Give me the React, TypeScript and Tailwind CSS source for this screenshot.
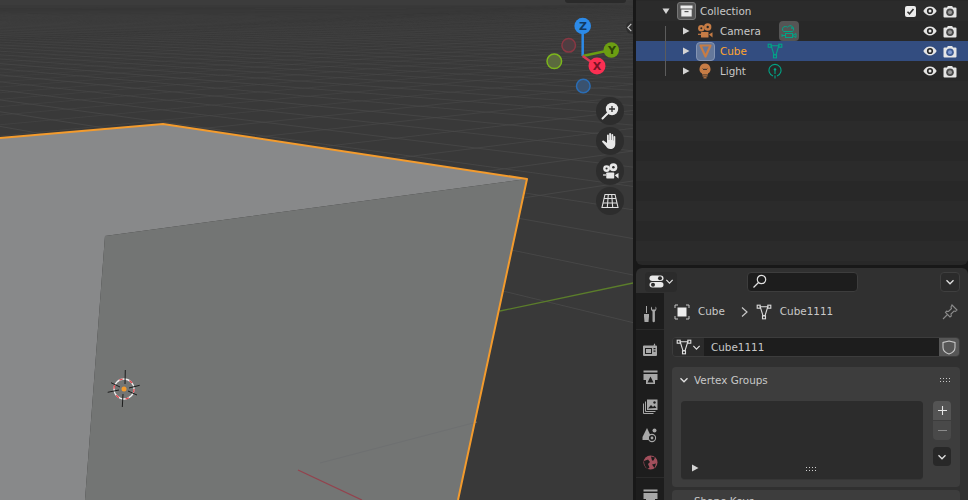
import type { ReactNode } from 'react';

const ORANGE = '#c67c45';
const TEAL = '#00a587';

// perspective floor grid, two pencils of lines meeting at the vanishing points
const HORIZON = -36.6;
const gridLines = [
  ...Array.from({ length: 60 }, (_, i) => {
    const k = i - 1;
    const y = HORIZON + 1 / (0.003209 + 0.000425 * k);
    const slope = (y - 11) / 1284;
    return { y0: y - slope * 633, y1: y, fade: Math.pow(Math.max(0, 1 - k / 50), 1.5) };
  }),
  ...Array.from({ length: 36 }, (_, i) => {
    const k = i + 2;
    const y = HORIZON + 1 / (0.003129 + 0.000734 * k);
    const slope = (-105 - y) / 1847;
    return { y0: y - slope * 633, y1: y, fade: Math.pow(Math.max(0, 1 - k / 34), 1.5) };
  }),
];

const Triangle = ({ down, className }: { down?: boolean; className?: string }) => (
  <svg width="8" height="8" viewBox="0 0 8 8" className={className}>
    <path d={down ? 'M0.5 1.5h7L4 7z' : 'M1 0.5v7L7.5 4z'} fill="#d4d4d4" />
  </svg>
);

const Chevron = ({ size = 10, color = '#e0e0e0' }: { size?: number; color?: string }) => (
  <svg width={size} height={size} viewBox="0 0 10 10">
    <path d="M1.5 3.2 5 6.8l3.5-3.6" fill="none" stroke={color} strokeWidth="1.3" />
  </svg>
);

const Eye = () => (
  <svg width="14" height="10" viewBox="0 0 14 10">
    <path d="M0.3 5C2 2 4.3 0.6 7 0.6S12 2 13.7 5C12 8 9.700 9.400 7 9.400S2 8 0.300 5z" fill="#e6e6e6" />
    <circle cx="7" cy="5" r="3.100" fill="#282828" />
    <circle cx="7" cy="5" r="1.500" fill="#e6e6e6" />
  </svg>
);

const RenderCam = ({ selected }: { selected?: boolean }) => (
  <svg width="14" height="13" viewBox="0 0 14 13">
    <path d="M1.500 2.500h2.500l.8-1.500h4.400l.8 1.500h2.500a1 1 0 0 1 1 1v8a1 1 0 0 1-1 1h-11a1 1 0 0 1-1-1v-8a1 1 0 0 1 1-1z" fill="#e6e6e6" />
    <circle cx="7" cy="7.300" r="3.800" fill={selected ? '#3f5b94' : '#4a4a4a'} />
    <circle cx="7" cy="7.300" r="2" fill={selected ? '#7f9bd4' : '#9a9a9a'} />
  </svg>
);

const MovieCam = ({ color, bg, size = 16 }: { color: string; bg: string; size?: number }) => (
  <svg width={size} height={size} viewBox="0 0 16 16">
    <circle cx="4.300" cy="5.200" r="3.200" fill={color} />
    <circle cx="10.700" cy="4" r="3.700" fill={color} />
    <circle cx="4.300" cy="5.200" r="1" fill={bg} />
    <circle cx="10.700" cy="4" r="1.200" fill={bg} />
    <rect x="4" y="9" width="7.500" height="5.500" rx="0.600" fill={color} />
    <rect x="1" y="10.700" width="3" height="1.200" fill={color} />
    <path d="M12 11.500 15.500 9.300v5.200z" fill={color} />
  </svg>
);

// the outlined camera data icon, it sits in its own grey button in the outliner
const CameraData = () => (
  <svg width="16" height="16" viewBox="0 0 16 16" fill="none" stroke={TEAL} strokeWidth="1">
    <path d="M2.500 8.500A2.800 2.800 0 0 1 4.500 3.500C5.500 3.500 6 3.800 6.500 4.300A3.300 3.300 0 1 1 11.500 8.500z" />
    <circle cx="11" cy="5" r="0.900" fill={TEAL} stroke="none" />
    <rect x="4.500" y="10.500" width="7" height="4" />
    <path d="M1 12.500h3.500M1 11v3M11.500 12.500 15 10.500v4z" />
  </svg>
);

const MeshData = ({ color = TEAL, size = 16 }: { color?: string; size?: number }) => (
  <svg width={size} height={size} viewBox="0 0 16 16" fill="none" stroke={color} strokeWidth="1.100">
    <path d="M4.200 2.700H11.800L9 11.800H7z" />
    <rect x="1.200" y="1.200" width="3" height="3" />
    <rect x="11.800" y="1.200" width="3" height="3" />
    <rect x="6.500" y="11.800" width="3" height="3" />
  </svg>
);

const Bulb = () => (
  <svg width="14" height="16" viewBox="0 0 14 16">
    <path d="M7 0.500a5.500 5.500 0 0 1 3 10.100V11.500H4v-.9A5.500 5.500 0 0 1 7 0.500z" fill={ORANGE} />
    <path d="M4.800 5.500 6 7l1-1.200L8 7l1.200-1.500" stroke="#2a2a2a" strokeWidth="0.900" fill="none" />
    <rect x="4.500" y="12.300" width="5" height="1.200" fill={ORANGE} />
    <rect x="5.500" y="14.200" width="3" height="1.200" fill={ORANGE} />
  </svg>
);

const LightData = () => (
  <svg width="14" height="16" viewBox="0 0 14 16" fill="none" stroke={TEAL} strokeWidth="1.100">
    <path d="M5 13A6 6 0 1 1 9 13" />
    <circle cx="7" cy="6.500" r="1.300" fill={TEAL} stroke="none" />
    <path d="M7 7.500V11M7 12.500V15.500" />
  </svg>
);

const Row = ({
  pad,
  bg,
  children,
  selected,
}: {
  pad: string;
  bg: string;
  children: ReactNode;
  selected?: boolean;
}) => (
  <div className={`flex h-5 shrink-0 items-center ${bg}`}>
    <div className={`flex flex-1 items-center ${pad}`}>{children}</div>
    <div className="flex w-[47px] items-center justify-end gap-1.5 pr-[11px]">
      <Eye />
      <RenderCam selected={selected} />
    </div>
  </div>
);

const NavButton = ({ children }: { children: ReactNode }) => (
  <div className="flex h-7 w-7 items-center justify-center rounded-full bg-[#2d2d2d]">{children}</div>
);

const Viewport = () => (
  <div className="relative h-full w-[633px] shrink-0 overflow-hidden bg-[#393939]">
    <svg width="633" height="500" viewBox="0 0 633 500" className="absolute inset-0">
      <rect width="633" height="5" fill="#3c3c3c" />
      {gridLines.map((l, i) => (
        <line key={i} x1="0" y1={l.y0} x2="633" y2={l.y1} stroke="#4a4a4a" strokeOpacity={l.fade * 0.8} strokeWidth="1" />
      ))}
      <line x1="500" y1="311" x2="633" y2="283" stroke="#5b7d2b" strokeWidth="1.300" />
      <polygon points="0,138 163,124 527,179 105,236 85,500 0,500" fill="#88898a" />
      <polygon points="105,236 527,179 458,500 85,500" fill="#737574" />
      <line x1="320" y1="463" x2="477" y2="422" stroke="#6e7071" strokeWidth="1" />
      <line x1="298" y1="470" x2="362" y2="500" stroke="#94424d" strokeWidth="1.300" />
      <polyline points="0,138 163,124 527,179 458,500" fill="none" stroke="#f39b2d" strokeWidth="2" strokeLinejoin="round" />

      {/* 3d cursor */}
      <circle cx="124" cy="389" r="10" fill="none" stroke="#f0f0f0" strokeWidth="1.300" />
      <circle cx="124" cy="389" r="10" fill="none" stroke="#e8484f" strokeWidth="1.300" strokeDasharray="3.500 7" />
      <g stroke="#1c1c1c" strokeWidth="1">
        <path d="M125.300 370 125 384M122.300 407 123 394" />
        <path d="M107.700 392.300 119 390M139.700 385.300 129 388" />
        <path d="M111 382.700 120 387M137 395 128 391" />
      </g>
      <circle cx="124" cy="389" r="2.500" fill="#f39b2d" />

      {/* gizmo */}
      <circle cx="568.700" cy="45.300" r="6.800" fill="#4f3d41" stroke="#8a3743" strokeWidth="1.500" />
      <circle cx="554.300" cy="61.300" r="7.300" fill="#5b6a3e" stroke="#7cb61c" strokeWidth="1.500" />
      <circle cx="583.300" cy="86" r="6.800" fill="#3a526f" stroke="#2a6db5" strokeWidth="1.500" />
      <line x1="582.700" y1="56" x2="582.700" y2="30" stroke="#2c8ae8" strokeWidth="2.500" />
      <line x1="582.700" y1="56" x2="611" y2="50" stroke="#6b9e12" strokeWidth="2.500" />
      <line x1="582.700" y1="56" x2="597" y2="66" stroke="#d93a55" strokeWidth="2.500" />
      <circle cx="582.700" cy="26" r="8.300" fill="#2c8ae8" />
      <circle cx="611.300" cy="50" r="7.800" fill="#6c9e12" />
      <circle cx="597" cy="66" r="8.500" fill="#fb2f52" />
    </svg>

    {/* gizmo letters */}
    <div className="absolute left-[574px] top-[18px] flex h-4 w-[18px] items-center justify-center text-[11px] font-bold leading-none text-[#123a63]">Z</div>
    <div className="absolute left-[603px] top-[42px] flex h-4 w-[18px] items-center justify-center text-[11px] font-bold leading-none text-[#2f4508]">Y</div>
    <div className="absolute left-[588px] top-[58px] flex h-4 w-[18px] items-center justify-center text-[11px] font-bold leading-none text-[#7a1226]">X</div>

    <div className="absolute left-[596px] top-[97px] flex flex-col gap-0.5">
      <NavButton>
        <svg width="18" height="18" viewBox="0 0 18 18">
          <circle cx="11" cy="7" r="6.200" fill="#e8e8e8" />
          <path d="M6.500 11.500 1.500 16.500" stroke="#e8e8e8" strokeWidth="2" strokeLinecap="round" />
          <path d="M11 4v6M8 7h6" stroke="#2d2d2d" strokeWidth="1.300" />
        </svg>
      </NavButton>
      <NavButton>
        <svg width="18" height="18" viewBox="0 0 18 18" fill="#e8e8e8">
          <path d="M6 9V3.500a.9.900 0 0 1 1.800 0V8h.4V1.800a.9.900 0 0 1 1.800 0V8h.400V2.800a.9.900 0 0 1 1.800 0V8.500h.3V4.800a.9.900 0 0 1 1.800 0V12c0 3-2 5-4.800 5-2.300 0-3.500-1-4.700-3L1.200 10c-.600-1 .8-2 1.600-1.200L6 11z" />
        </svg>
      </NavButton>
      <NavButton>
        <MovieCam color="#e8e8e8" bg="#2d2d2d" size={17} />
      </NavButton>
      <NavButton>
        <svg width="18" height="16" viewBox="0 0 18 16" fill="none" stroke="#e0e0e0" strokeWidth="1.100">
          <path d="M4 1.500h10L17 14.500H1z" />
          <path d="M3 5.500h12M2 10h14M7.300 1.500 6.300 14.500M10.700 1.500l1 13" />
        </svg>
      </NavButton>
    </div>

    {/* header dropdown peeking in at the top, sidebar arrow on the right */}
    <div className="absolute left-[565px] top-0 h-[3px] w-[61px] rounded-b bg-[#2a2a2a]" />
    <div className="absolute right-0 top-[21px] flex h-[13px] w-[7px] items-center justify-center rounded-l-md bg-[#2e2e2e]">
      <svg width="5" height="9" viewBox="0 0 5 9">
        <path d="M4.300 0.800.8 4.500l3.500 3.700" fill="none" stroke="#c8c8c8" strokeWidth="1.100" />
      </svg>
    </div>
  </div>
);

const Outliner = () => (
  <div className="relative flex h-[265px] shrink-0 flex-col overflow-hidden rounded-b-md bg-[#282828] pt-px">
    <Row pad="pl-[26px]" bg="bg-[#2b2b2b]">
      <Triangle down />
      <div className="ml-[7px] flex h-[18px] w-[19px] items-center justify-center rounded-[3px] border border-[#777777] bg-[#555555]">
        <svg width="13" height="12" viewBox="0 0 13 12">
          <rect x="0.500" y="0.500" width="12" height="3" fill="#ececec" />
          <rect x="1.300" y="4.500" width="10.400" height="7" fill="#ececec" />
          <rect x="4.500" y="6" width="4" height="1.200" fill="#555555" />
        </svg>
      </div>
      <span className="ml-[4px] mt-[2px] text-[#c8c8c8]">Collection</span>
      <div className="ml-auto mr-[5px] flex h-[11px] w-[11px] items-center justify-center rounded-[2px] bg-[#ececec]">
        <svg width="9" height="9" viewBox="0 0 9 9">
          <path d="M1.500 4.800 3.500 6.800 7.500 2" fill="none" stroke="#333333" strokeWidth="1.600" />
        </svg>
      </div>
    </Row>
    <Row pad="pl-[46px]" bg="bg-[#282828]">
      <Triangle />
      <div className="ml-[6px] flex w-[18px] justify-center">
        <MovieCam color={ORANGE} bg="#282828" />
      </div>
      <span className="ml-[6px] mt-[2px] text-[#c8c8c8]">Camera</span>
      <div className="ml-[18px] flex h-5 w-5 items-center justify-center rounded bg-[#555555]">
        <CameraData />
      </div>
    </Row>
    <Row pad="pl-[46px]" bg="bg-[#334d80]" selected>
      <Triangle />
      <div className="ml-[6px] flex h-[19px] w-[19px] items-center justify-center rounded-[4px] border border-[#8494b3] bg-[#65789b]">
        <svg width="13" height="14" viewBox="0 0 13 14">
          <path d="M1.500 1.500h10L6.500 12.500z" fill="none" stroke={ORANGE} strokeWidth="2.200" strokeLinejoin="round" />
        </svg>
      </div>
      <span className="ml-[5px] mt-[2px] text-[#ffa52e]">Cube</span>
      <div className="ml-[20px]">
        <MeshData />
      </div>
    </Row>
    <Row pad="pl-[46px]" bg="bg-[#282828]">
      <Triangle />
      <div className="ml-[6px] flex w-[18px] justify-center">
        <Bulb />
      </div>
      <span className="ml-[6px] mt-[2px] text-[#c8c8c8]">Light</span>
      <div className="ml-[22px]">
        <LightData />
      </div>
    </Row>
    {[0, 1, 2, 3, 4, 5, 6, 7, 8].map((n) => (
      <div key={n} className={`h-5 shrink-0 ${n % 2 === 0 ? 'bg-[#2b2b2b]' : 'bg-[#282828]'}`} />
    ))}
    <div className="absolute left-[29px] top-[26px] h-[50px] w-px bg-[#5c5c5c]" />
  </div>
);

const Dots = ({ color = '#d0d0d0' }: { color?: string }) => (
  <svg width="11" height="5" viewBox="0 0 11 5" fill={color}>
    {[0, 3, 6, 9].map((x) => (
      <g key={x}>
        <rect x={x} y="0" width="1" height="1" />
        <rect x={x} y="3" width="1" height="1" />
      </g>
    ))}
  </svg>
);

const tabIcons: { name: string; icon: ReactNode; h: string }[] = [
  {
    name: 'render',
    h: 'mt-[12px]',
    icon: (
      <svg width="16" height="15" viewBox="0 0 16 15" fill="#a8a8a8">
        <path d="M2 3.500h9.500l.8-2 1 .4-.6 1.600H14a1 1 0 0 1 1 1V13a1 1 0 0 1-1 1H2a1 1 0 0 1-1-1V4.500a1 1 0 0 1 1-1z" />
        <rect x="3" y="6" width="7" height="6" fill="#1d1d1d" />
        <rect x="4" y="7" width="5" height="4" fill="#a8a8a8" />
        <rect x="11.500" y="6" width="2" height="1.200" fill="#1d1d1d" />
        <rect x="11.500" y="8.500" width="2" height="1.200" fill="#1d1d1d" />
      </svg>
    ),
  },
  {
    name: 'output',
    h: 'mt-[13px]',
    icon: (
      <svg width="15" height="15" viewBox="0 0 15 15" fill="#a8a8a8">
        <rect x="0.500" y="0.500" width="14" height="2" />
        <path d="M0.500 4h14v6h-2.500v4h-9v-4H0.500z" />
        <path d="M7.500 6.500 10.500 12.500h-6z" fill="#1d1d1d" />
      </svg>
    ),
  },
  {
    name: 'view layer',
    h: 'mt-[14px]',
    icon: (
      <svg width="15" height="15" viewBox="0 0 15 15" fill="none" stroke="#a8a8a8" strokeWidth="1">
        <rect x="4" y="0.500" width="10.500" height="10.500" fill="#a8a8a8" stroke="none" />
        <path d="M5 9.500 8 6l2 2 1.500-1.500 2 2.500z" fill="#1d1d1d" stroke="none" />
        <circle cx="11.500" cy="3.500" r="1.200" fill="#1d1d1d" stroke="none" />
        <path d="M2.500 2.500v10h10M0.500 4.500v10h10" />
      </svg>
    ),
  },
  {
    name: 'scene',
    h: 'mt-[13px]',
    icon: (
      <svg width="16" height="16" viewBox="0 0 16 16">
        <path d="M5 1 9 9.500 7 13H0.500v-3z" fill="#a8a8a8" />
        <circle cx="12.500" cy="3.500" r="2" fill="#a8a8a8" />
        <circle cx="10" cy="11" r="3.600" fill="#1d1d1d" stroke="#a8a8a8" strokeWidth="1.100" />
        <circle cx="10" cy="11" r="1.400" fill="#a8a8a8" />
      </svg>
    ),
  },
  {
    name: 'world',
    h: 'mt-[13px]',
    icon: (
      <svg width="15" height="15" viewBox="0 0 15 15">
        <circle cx="7.500" cy="7.500" r="7" fill="#a34f5c" />
        <path d="M1 6 5 4.500 7 7l-2 2 1.500 3.500-2 1.500C2 12 1 9 1 6zM8 1.500l4 1-1.500 3H9zM9 9.500l4-1-1.500 4.500z" fill="#1d1d1d" />
      </svg>
    ),
  },
];

const Properties = () => (
  <div className="relative flex min-h-0 flex-1 flex-col overflow-hidden rounded-t-md bg-[#303030] text-[#c8c8c8]">
    {/* header */}
    <div className="flex h-[25px] shrink-0 items-center pl-[9px] pr-[8px] pt-[2px]">
      <div className="flex h-5 w-8 items-center justify-center gap-px rounded bg-[#2b2b2b]">
        <svg width="15" height="13" viewBox="0 0 15 13">
          <rect x="0.500" y="0.500" width="14" height="5.500" rx="2.700" fill="#e8e8e8" />
          <circle cx="11" cy="3.200" r="2" fill="#2b2b2b" />
          <rect x="0.500" y="7" width="14" height="5.500" rx="2.700" fill="#e8e8e8" />
          <circle cx="4" cy="9.700" r="2" fill="#2b2b2b" />
        </svg>
        <Chevron size={9} />
      </div>
      <div className="ml-[70px] flex h-5 w-[111px] items-center rounded border border-[#3d3d3d] bg-[#1d1d1d] pl-[4px]">
        <svg width="15" height="15" viewBox="0 0 15 15" fill="none" stroke="#e0e0e0" strokeWidth="1.200">
          <circle cx="9.500" cy="5.500" r="4.200" />
          <path d="M6.500 8.500 1.500 13.500" />
        </svg>
      </div>
      <div className="ml-auto flex h-5 w-5 items-center justify-center rounded border border-[#3f3f3f] bg-[#2b2b2b]">
        <Chevron />
      </div>
    </div>

    <div className="flex min-h-0 flex-1">
      {/* tabs */}
      <div className="flex w-[28px] shrink-0 flex-col items-center bg-[#1d1d1d] pt-[12px]">
        <svg width="18" height="18" viewBox="0 0 18 18" fill="#a8a8a8" className="shrink-0">
          <path d="M5 1h1v7H5zM3 9h5v2.500L7.500 17h-4L3 11.500z" />
          <path d="M11 1.500c-1.500 1-1.600 3.500.500 5V16a1.200 1.200 0 0 0 2.400 0V6.500c2-1.500 2-4 .600-5V4.500h-3.500z" />
        </svg>
        <div className="mt-[6px] h-px w-full shrink-0 bg-[#2a2a2a]" />
        {tabIcons.map((t) => (
          <div key={t.name} className={`flex h-[15px] shrink-0 items-center justify-center ${t.h}`}>
            {t.icon}
          </div>
        ))}
        <div className="mt-[7px] h-px w-full shrink-0 bg-[#2a2a2a]" />
        <svg width="15" height="15" viewBox="0 0 15 15" fill="#a8a8a8" className="mt-[11px] shrink-0">
          <rect x="0.500" y="0.500" width="14" height="2" />
          <path d="M0.500 4h14v6h-2.500v4h-9v-4H0.500z" />
        </svg>
      </div>

      {/* context */}
      <div className="flex min-w-0 flex-1 flex-col pl-2 pr-2">
        <div className="flex h-[37px] shrink-0 items-center pl-[2px] pr-[2px] pt-[1px]">
          <svg width="16" height="16" viewBox="0 0 16 16" fill="none" stroke="#c4c4c4" strokeWidth="1">
            <path d="M1 4V1h3M12 1h3v3M15 12v3h-3M4 15H1v-3" />
            <rect x="3.500" y="3.500" width="9" height="9" fill="#ececec" stroke="none" />
          </svg>
          <span className="ml-[8px]">Cube</span>
          <div className="ml-[15px]">
            <svg width="9" height="12" viewBox="0 0 9 12">
              <path d="M2 1.500 7 6l-5 4.500" fill="none" stroke="#c8c8c8" strokeWidth="1.200" />
            </svg>
          </div>
          <div className="ml-[7px]">
            <MeshData color="#dcdcdc" />
          </div>
          <span className="ml-[8px]">Cube1111</span>
          <svg width="16" height="16" viewBox="0 0 16 16" fill="none" stroke="#8a8a8a" strokeWidth="1.100" className="ml-auto">
            <path d="M10 1 15 6 13.500 7.300 12 7 9 10l.3 2-1.300 1L3.500 8.500l1-1.300 2 .3L9.500 4.500 9 3z" />
            <path d="M5.500 10.500 1 15" />
          </svg>
        </div>

        <div className="mt-[7px] flex h-5 shrink-0 overflow-hidden rounded border border-[#3c3c3c]">
          <div className="flex w-[31px] items-center justify-center bg-[#2b2b2b]">
            <MeshData color="#e0e0e0" />
            <Chevron size={9} />
          </div>
          <div className="flex flex-1 items-center bg-[#1d1d1d] pl-[7px] pt-px">Cube1111</div>
          <div className="flex w-5 items-center justify-center bg-[#565656]">
            <svg width="14" height="15" viewBox="0 0 14 15">
              <path d="M7 1 13 2.500V7.500C13 11 10 13 7 14 4 13 1 11 1 7.500V2.500z" fill="none" stroke="#c8c8c8" strokeWidth="1.100" />
            </svg>
          </div>
        </div>

        {/* vertex groups */}
        <div className="mt-[10px] flex h-[120px] shrink-0 flex-col rounded bg-[#3d3d3d]">
          <div className="flex h-[26px] shrink-0 items-center pl-[7px] pr-[9px]">
            <Chevron />
            <span className="ml-[5px] mt-px">Vertex Groups</span>
            <div className="ml-auto">
              <Dots color="#c8c8c8" />
            </div>
          </div>
          <div className="mt-[8px] flex gap-[10px] pl-[9px] pr-[9px]">
            <div className="relative flex h-[78px] flex-1 items-end rounded bg-[#2c2c2c] pb-[7px] shadow-[0_1px_0_#363636]">
              <Triangle className="ml-[10px]" />
              <div className="absolute bottom-[7px] left-[125px]">
                <Dots />
              </div>
            </div>
            <div className="flex w-[18px] flex-col">
              <div className="flex h-[19px] items-center justify-center rounded-t bg-[#545454]">
                <svg width="11" height="11" viewBox="0 0 11 11">
                  <path d="M5.500 1v9M1 5.500h9" stroke="#e6e6e6" strokeWidth="1.100" />
                </svg>
              </div>
              <div className="mt-px flex h-[19px] items-center justify-center rounded-b bg-[#494949]">
                <div className="h-px w-[9px] bg-[#8a8a8a]" />
              </div>
              <div className="mt-[7px] flex h-[19px] items-center justify-center rounded bg-[#282828]">
                <Chevron />
              </div>
            </div>
          </div>
        </div>

        {/* shape keys, cut off by the window */}
        <div className="mt-[3px] flex h-6 shrink-0 items-center rounded bg-[#3d3d3d] pl-[22px]">Shape Keys</div>
      </div>
    </div>
  </div>
);

export default function App() {
  return (
    <div className="flex h-[500px] w-[968px] overflow-hidden bg-[#181818] font-['DejaVu_Sans',sans-serif] text-[10.4px]">
      <Viewport />
      <div className="flex min-w-0 flex-1 flex-col gap-[3px] pl-[3px]">
        <Outliner />
        <Properties />
      </div>
    </div>
  );
}
